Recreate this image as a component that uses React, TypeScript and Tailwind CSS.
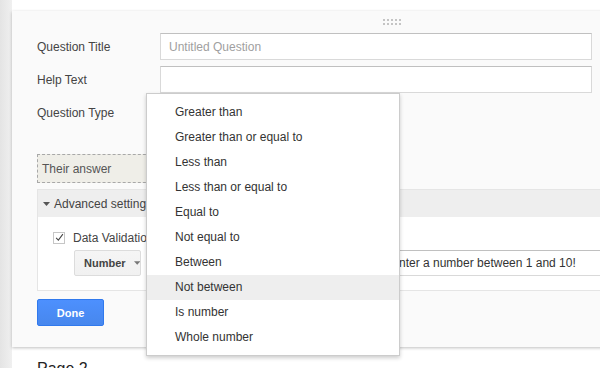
import React from 'react';

const options = [
  'Greater than',
  'Greater than or equal to',
  'Less than',
  'Less than or equal to',
  'Equal to',
  'Not equal to',
  'Between',
  'Not between',
  'Is number',
  'Whole number',
];

function Grip() {
  return (
    <div className="grid grid-cols-5 gap-x-[2px] gap-y-[2px]">
      {Array.from({ length: 10 }).map((_, i) => (
        <span key={i} className="block h-[2px] w-[2px] bg-[#c4c4c4]" />
      ))}
    </div>
  );
}

function Field({ label, placeholder }: { label: string; placeholder?: string }) {
  return (
    <div className="flex items-center">
      <span className="w-[123px] shrink-0 text-[12px] text-[#444]">{label}</span>
      <div className="flex h-[27px] w-[432px] items-center border border-[#d9d9d9] border-t-[#c0c0c0] bg-white px-[8px] text-[12px] text-[#a0a0a0]">
        {placeholder}
      </div>
    </div>
  );
}

export default function App() {
  return (
    <div className="relative flex h-[368px] w-[600px] overflow-hidden bg-white font-['Liberation_Sans',Arial,sans-serif] leading-[16px]">
      {/* left gutter */}
      <div className="w-[12px] shrink-0 bg-gradient-to-r from-[#e4e4e4] to-[#f0f0f0]" />

      <div className="flex min-w-0 flex-1 flex-col">
        <div className="h-[11px] shrink-0 bg-white" />

        {/* question card */}
        <div className="w-[700px] shrink-0 bg-[#fafafa] pb-[21px] pl-[25px] pt-[8px] shadow-[0_1px_3px_rgba(0,0,0,0.25)]">
          <div className="flex h-[6px] pl-[346px]">
            <Grip />
          </div>

          <div className="mt-[8px] flex flex-col gap-[6px]">
            <Field label="Question Title" placeholder="Untitled Question" />
            <Field label="Help Text" />
            <div className="flex h-[27px] items-center">
              <span className="w-[123px] shrink-0 text-[12px] text-[#444]">Question Type</span>
            </div>
          </div>

          <div className="mt-[28px] flex h-[29px] w-[250px] items-center border border-dashed border-[#a8a8a8] bg-[#efeee8] pl-[4px] text-[12px] text-[#555]">
            Their answer
          </div>

          {/* advanced settings */}
          <div className="mt-[6px] w-[620px] border border-[#e5e5e5] bg-white">
            <div className="flex h-[27px] items-center bg-[#eeeeee] pl-[5px] text-[12px] text-[#444]">
              <svg width="7" height="4" viewBox="0 0 7 4" className="mr-[4px]">
                <path d="M0 0h7L3.5 4z" fill="#555" />
              </svg>
              Advanced settings
            </div>
            <div className="pb-[14px] pl-[15px] pt-[13px]">
              <div className="flex h-[16px] items-center">
                <span className="flex h-[12px] w-[12px] items-center justify-center border border-[#c6c6c6] bg-white">
                  <svg width="12" height="11" viewBox="0 0 12 11" className="-mt-[2px] ml-[1px]">
                    <path d="M1.5 6l3 3 6-8" fill="none" stroke="#444" strokeWidth="1.4" />
                  </svg>
                </span>
                <span className="ml-[8px] text-[12px] text-[#444]">Data Validation</span>
              </div>
              <div className="mt-[4px] flex h-[26px] items-center pl-[21px]">
                <div className="flex h-[26px] w-[67px] items-center rounded-[2px] border border-[#dcdcdc] bg-gradient-to-b from-[#f5f5f5] to-[#f1f1f1] pl-[9px] text-[11px] font-bold text-[#444]">
                  Number
                  <svg width="7" height="4" viewBox="0 0 7 4" className="ml-[8px]">
                    <path d="M0 0h7L3.5 4z" fill="#777" />
                  </svg>
                </div>
                <div className="ml-[241px] flex h-[26px] flex-1 items-center border border-[#d9d9d9] border-t-[#c0c0c0] bg-white pl-[8px] text-[12px] text-[#333]">
                  Enter a number between 1 and 10!
                </div>
              </div>
            </div>
          </div>

          <button className="mt-[8px] flex h-[27px] w-[67px] items-center justify-center rounded-[2px] border border-[#3079ed] bg-gradient-to-b from-[#4d90fe] to-[#4787ed] text-[11px] font-bold text-white">
            Done
          </button>
        </div>

        <div className="pl-[25px] pt-[12px] text-[16px] leading-[20px] text-[#222]">Page 2</div>
      </div>

      {/* open dropdown menu */}
      <div className="absolute left-[146px] top-[93px] w-[254px] border border-[#cccccc] bg-white pb-[5px] pt-[6px] shadow-[0_2px_4px_rgba(0,0,0,0.2)]">
        {options.map((o) => (
          <div
            key={o}
            className={`flex h-[25px] items-center pb-[2px] pl-[28px] text-[12px] text-[#333] ${
              o === 'Not between' ? 'bg-[#eeeeee]' : ''
            }`}
          >
            {o}
          </div>
        ))}
      </div>
    </div>
  );
}
